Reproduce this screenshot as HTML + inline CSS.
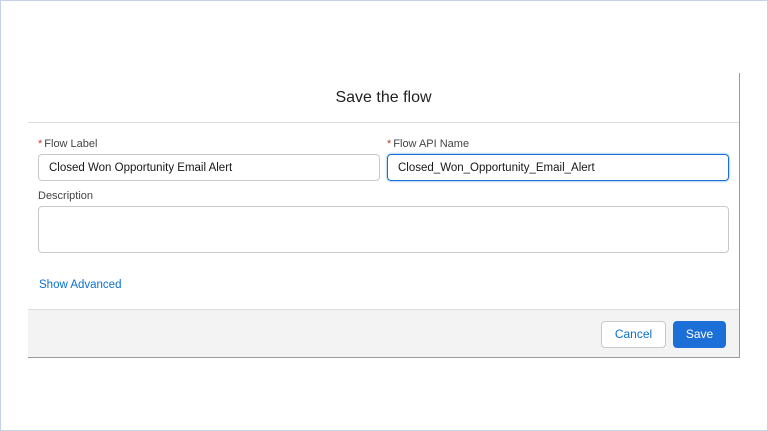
<!DOCTYPE html>
<html><head><style>
*{box-sizing:border-box;margin:0;padding:0}
body{width:768px;height:431px;background:#fff;font-family:"Liberation Sans",sans-serif;position:relative;overflow:hidden}
.frame{position:absolute;left:0;top:0;width:768px;height:431px;border:1px solid #c5d3e8}
.modal{position:absolute;left:28px;top:73px;width:712px;height:285px;border-right:1px solid #999;border-bottom:1px solid #999;background:#fff}
.title{position:absolute;left:0;right:0;top:16px;text-align:center;font-size:16px;color:#222}
.hl{position:absolute;left:0;right:0;top:49px;border-top:1px solid #ddd}
.lbl{position:absolute;font-size:11px;color:#444}
.lbl b{color:#c23934;font-weight:normal;margin-right:2px}
.inp{position:absolute;height:27px;border:1px solid #c9c9c9;border-radius:4px;font-size:11.5px;color:#181818;padding:7px 10px}
.foot{position:absolute;left:0;right:0;top:236px;bottom:0;background:#f3f3f3;border-top:1px solid #ddd}
.btn{position:absolute;height:27px;border-radius:4px;font-size:12px;text-align:center;line-height:25px}
</style></head><body>
<div class="frame"></div>
<div class="modal">
<div class="title">Save the flow</div>
<div class="hl"></div>
<div class="lbl" style="left:10px;top:65px"><b>*</b>Flow Label</div>
<div class="inp" style="left:10px;top:81px;width:342px">Closed Won Opportunity Email Alert</div>
<div class="lbl" style="left:359px;top:65px"><b>*</b>Flow API Name</div>
<div class="inp" style="left:359px;top:81px;width:342px;border-color:#1b6fd0;box-shadow:0 0 2px #5a9be6">Closed_Won_Opportunity_Email_Alert</div>
<div class="lbl" style="left:10px;top:117px">Description</div>
<div class="inp" style="left:10px;top:133px;width:691px;height:47px"></div>
<div style="position:absolute;left:11px;top:206px;font-size:11.5px;color:#0b6fd0">Show Advanced</div>
<div class="foot">
<div class="btn" style="left:573px;top:11px;width:65px;border:1px solid #c9c9c9;background:#fff;color:#0b6fd0">Cancel</div>
<div class="btn" style="left:645px;top:11px;width:53px;background:#1b6fd6;color:#fff;border:1px solid #1b6fd6">Save</div>
</div>
</div>
</body></html>
